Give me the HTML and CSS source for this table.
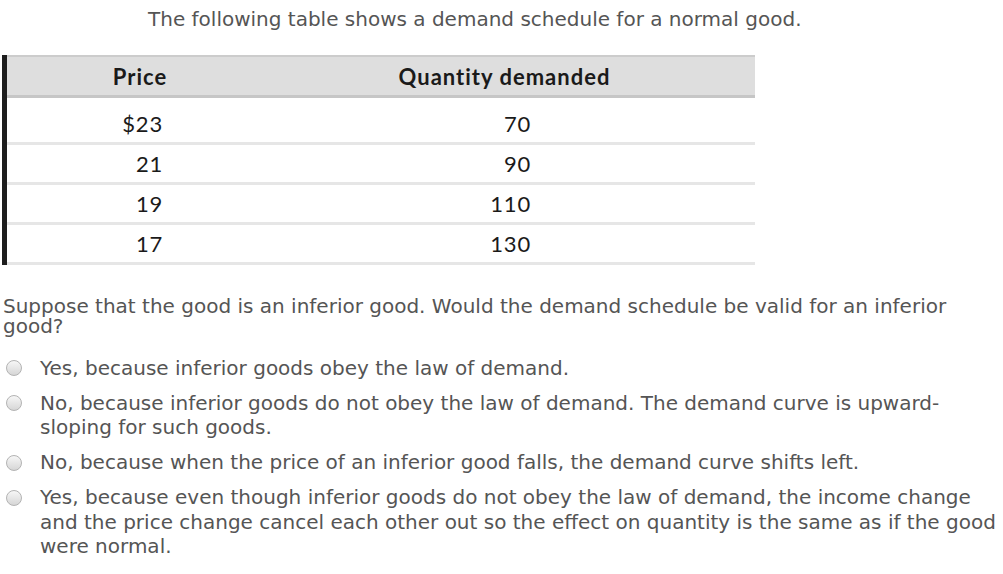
FILE: index.html
```html
<!DOCTYPE html>
<html>
<head>
<meta charset="utf-8">
<link rel="stylesheet" href="styles.css">
</head>
<body>
<p class="title">The following table shows a demand schedule for a normal good.</p>
<div class="tbl">
  <div class="row head">
    <div class="c1">Price</div>
    <div class="c2">Quantity demanded</div>
  </div>
  <div class="row first">
    <div class="c1">$23</div>
    <div class="c2">70</div>
  </div>
  <div class="row">
    <div class="c1">21</div>
    <div class="c2">90</div>
  </div>
  <div class="row">
    <div class="c1">19</div>
    <div class="c2">110</div>
  </div>
  <div class="row">
    <div class="c1">17</div>
    <div class="c2">130</div>
  </div>
</div>
<p class="question">Suppose that the good is an inferior good. Would the demand schedule be valid for an inferior good?</p>
<ul class="options">
  <li><span class="radio"></span><span class="label">Yes, because inferior goods obey the law of demand.</span></li>
  <li><span class="radio"></span><span class="label">No, because inferior goods do not obey the law of demand. The demand curve is upward-sloping for such goods.</span></li>
  <li><span class="radio"></span><span class="label">No, because when the price of an inferior good falls, the demand curve shifts left.</span></li>
  <li><span class="radio"></span><span class="label">Yes, because even though inferior goods do not obey the law of demand, the income change and the price change cancel each other out so the effect on quantity is the same as if the good were normal.</span></li>
</ul>
</body>
</html>
```
FILE: styles.css
```css
html, body {
  margin: 0;
  padding: 0;
  background: #fff;
}
body {
  font-family: "DejaVu Sans", Verdana, sans-serif;
  font-size: 20px;
  color: #555;
  width: 1003px;
}
.title {
  margin: 0;
  padding: 7px 0 0 148px;
  line-height: 24px;
}
.tbl {
  margin: 24px 0 0 2px;
  width: 748px;
  border-left: 5px solid #1e1e1e;
  font-family: Lato, "Open Sans", sans-serif;
  font-size: 22px;
  letter-spacing: 0.8px;
  color: #1a1a1a;
}
.row {
  display: flex;
  height: 37px;
  align-items: center;
  border-bottom: 3px solid #e6e6e6;
}
.row.first {
  padding-top: 7px;
}
.row.head {
  height: 38px;
  background: #dedede;
  border-top: 2px solid #cccccc;
  border-bottom: 3px solid #c6c6c6;
  font-weight: bold;
  letter-spacing: 1px;
}
.c1 {
  width: 266px;
  flex: none;
  box-sizing: border-box;
  text-align: right;
  padding-right: 110px;
}
.c2 {
  flex: 1;
  box-sizing: border-box;
  text-align: right;
  padding-right: 224px;
}
.head .c1 {
  text-align: center;
  padding-right: 0;
}
.head .c2 {
  text-align: center;
  padding-right: 19px;
}
.question {
  margin: 31px 0 0 3px;
  line-height: 20px;
}
.options {
  list-style: none;
  margin: 19.5px 0 0 0;
  padding: 0;
}
.options li {
  display: flex;
  align-items: flex-start;
  margin-bottom: 10.5px;
  line-height: 24.5px;
}
.radio {
  flex: none;
  width: 16px;
  height: 16px;
  box-sizing: border-box;
  border-radius: 50%;
  border: 1px solid #b3b3b3;
  background: linear-gradient(#f7f7f7, #d6d6d6);
  margin: 4.5px 0 0 6px;
}
.label {
  margin-left: 18px;
  width: 960px;
}
```
